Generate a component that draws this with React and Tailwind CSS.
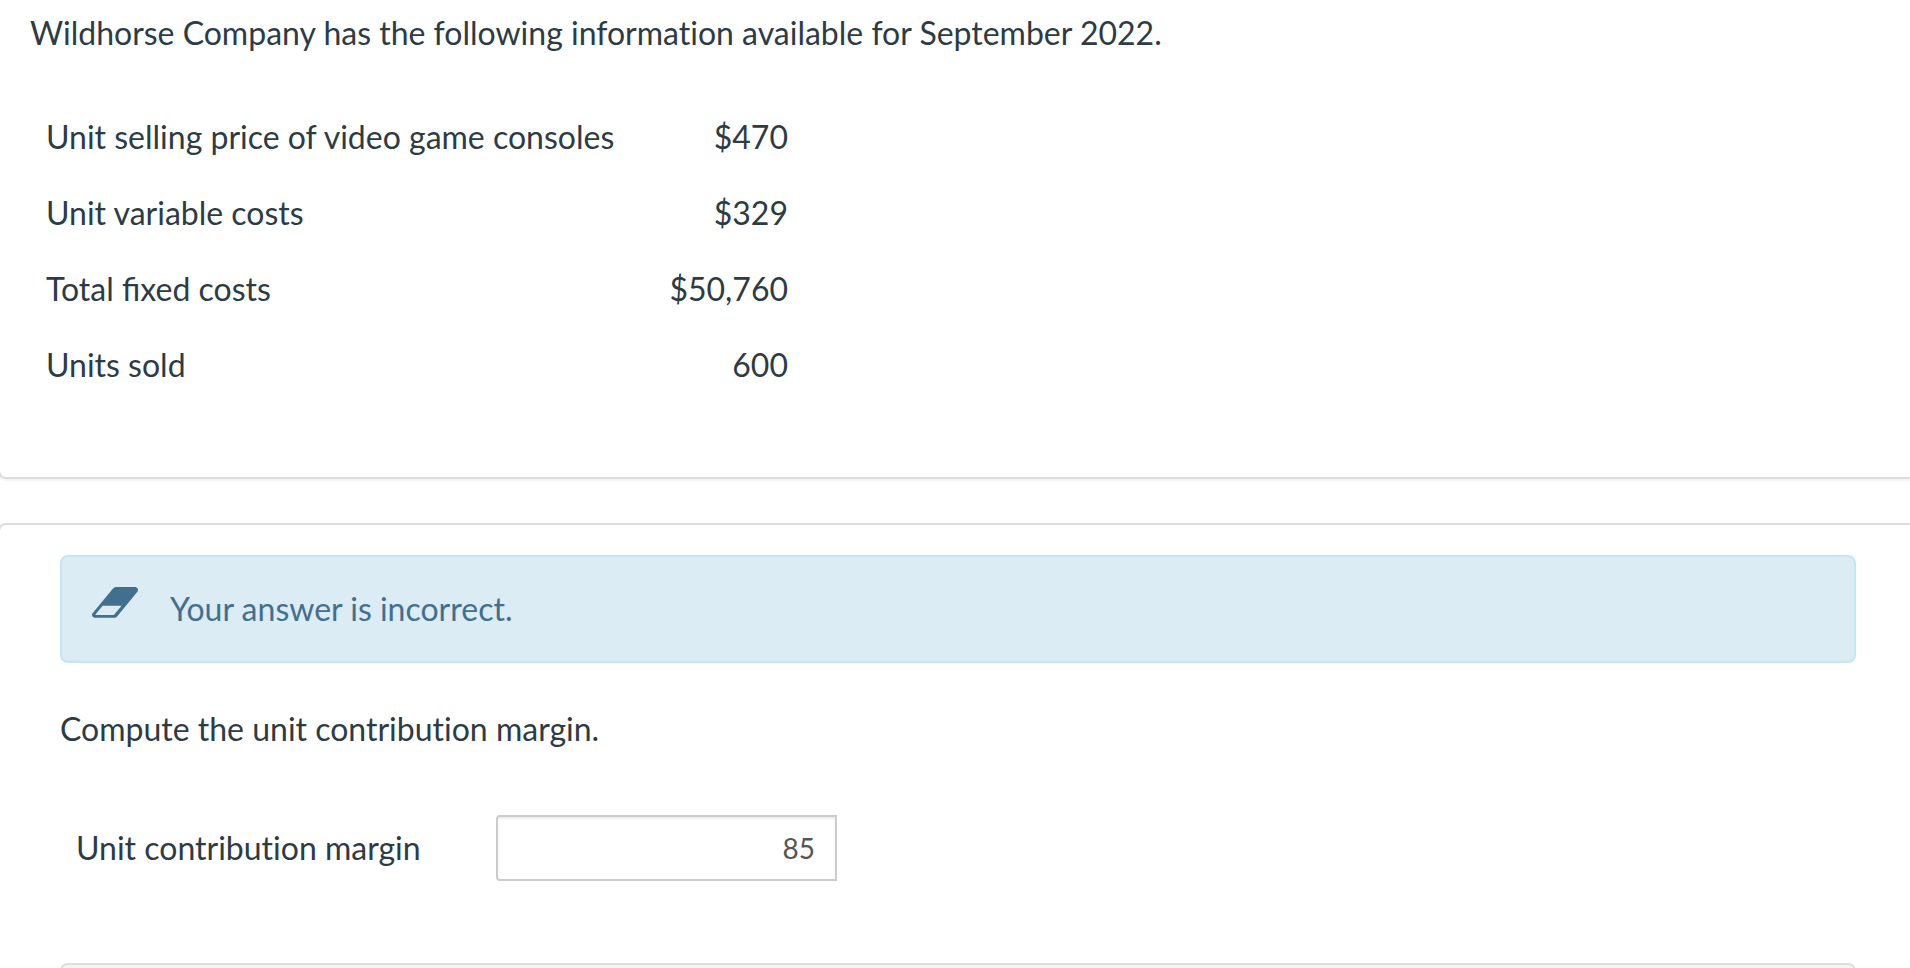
const rows = [
  { label: "Unit selling price of video game consoles", value: "$470" },
  { label: "Unit variable costs", value: "$329" },
  { label: "Total fixed costs", value: "$50,760" },
  { label: "Units sold", value: "600" },
];

const EraserIcon = () => (
  <svg className="mt-[30px] h-[31px] w-[46px] self-start" viewBox="0 0 46 31" aria-hidden="true">
    <path
      fillRule="evenodd"
      d="M24 0H43.5Q47 1 45.6 4.6L25.3 29.2Q24 30.8 22.3 30.8H2.5Q-1 30 .4 26.6L21 1.5Q22.3 0 24 0ZM10.6 18.8L3.4 27.4Q3.3 28 3.8 28H21Q21.8 28 22.3 27.4L29.6 18.8Z"
      fill="#436f8e"
    />
  </svg>
);

export default function App() {
  return (
    <div className="h-screen overflow-hidden bg-white font-[Lato,sans-serif] text-[32px] leading-[44px] text-[#2d3b45] [font-variant-ligatures:none]">
      {/* question info */}
      <section className="-mr-4 -ml-0.5 rounded-b-lg border-x-2 border-b-2 border-[#dcdcdc] px-[30px] pt-[11px] pb-[74px] shadow-[0_2px_2px_rgba(0,0,0,0.05)]">
        <p>Wildhorse Company has the following information available for September 2022.</p>
        <table className="mt-11 w-[774px] [font-variant-ligatures:normal]">
          <tbody>
            {rows.map((row) => (
              <tr key={row.label}>
                <th scope="row" className="p-4 text-left font-normal">
                  {row.label}
                </th>
                <td className="p-4 text-right">{row.value}</td>
              </tr>
            ))}
          </tbody>
        </table>
      </section>

      {/* answer */}
      <section className="-mr-4 -ml-0.5 mt-11 rounded-t-lg border-x-2 border-t-2 border-[#dcdcdc] pt-[30px] pr-[68px] pl-[60px]">
        <div
          role="alert"
          className="flex h-[108px] items-center rounded-lg border-2 border-[#c4e7ef] bg-[#dcecf5] pl-[30px] text-[#436f8e]"
        >
          <EraserIcon />
          <p className="ml-8">Your answer is incorrect.</p>
        </div>
        <p className="mt-11">Compute the unit contribution margin.</p>
        <div className="mt-16 flex items-center pl-4">
          <label htmlFor="margin" className="w-[420px]">
            Unit contribution margin
          </label>
          <input
            id="margin"
            type="text"
            defaultValue="85"
            className="h-[66px] w-[341px] rounded-l-sm border-2 border-[#ccc] px-5 text-right text-[28px] text-[#555] shadow-[inset_0_2px_2px_rgba(0,0,0,0.075)]"
          />
        </div>
        <div className="mt-[82px] h-16 rounded-t-lg border-2 border-[#ddd] bg-[#f5f5f5]" />
      </section>
    </div>
  );
}
